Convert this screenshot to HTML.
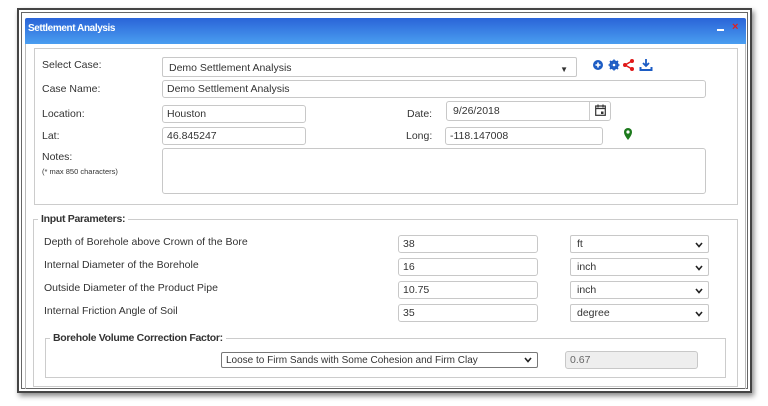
<!DOCTYPE html>
<html><head><style>
*{box-sizing:border-box;margin:0;padding:0}
body{width:768px;height:406px;background:#fff;position:relative;overflow:hidden;font-family:"Liberation Sans",sans-serif;font-size:10.5px;color:#333}
.a{position:absolute}
.inp{position:absolute;border:1px solid #c8c8c8;border-radius:3px;background:#fff;padding:2px 4px;font-size:10.5px;color:#333;height:18px;line-height:13px}
.sel{position:absolute;border:1px solid #c8c8c8;border-radius:2px;background:#fff;padding:2px 6px;font-size:10.5px;height:18px;line-height:13px}
.chev{position:absolute;right:5px;top:6px}
.lbl{position:absolute;font-size:10.5px;color:#333}
</style></head><body>
<div class="a" style="left:17px;top:8px;width:735px;height:385px;border:2px solid #444;box-shadow:2px 3px 5px #888;background:#fff"></div>
<div class="a" style="left:21px;top:12px;width:727px;height:377px;border:1px solid #666;background:#fff"></div>
<div class="a" style="left:25px;top:18px;width:721px;height:26px;background:linear-gradient(#2a64d8,#4a9ef0);border-radius:2px 2px 0 0"></div>
<div class="a" style="left:28px;top:23px;color:#fff;font-size:10px;font-weight:bold;letter-spacing:-0.4px">Settlement Analysis</div>
<div class="a" style="left:717px;top:29px;width:7px;height:2px;background:#fff"></div>
<div class="a" style="left:732px;top:21px;color:#e02020;font-size:11px;font-weight:bold">×</div>
<div class="a" style="left:25px;top:44px;width:721px;height:345px;border-left:1px solid #bbb;border-right:1px solid #bbb"></div>
<div class="a" style="left:34px;top:48px;width:704px;height:157px;border:1px solid #ccc"></div>
<div class="lbl" style="left:42px;top:59px">Select Case:</div>
<div class="sel" style="left:162px;top:57px;width:415px;height:20px;padding-top:4px">Demo Settlement Analysis<span class="a" style="right:8px;top:5px;font-size:8px">▼</span></div>
<svg class="a" style="left:591px;top:58px" width="62" height="14" viewBox="0 0 62 14">
<circle cx="7" cy="7" r="5" fill="#1c5cc4"/><path d="M4.5 7h5M7 4.5v5" stroke="#fff" stroke-width="1.6"/>
<circle cx="23" cy="7" r="3.6" fill="none" stroke="#1c5cc4" stroke-width="2.2"/><path d="M23 1.5v11M17.5 7h11M19 3l8 8M27 3l-8 8" stroke="#1c5cc4" stroke-width="1.6"/><circle cx="23" cy="7" r="1.3" fill="#fff"/>
<circle cx="34" cy="7" r="2" fill="#e01818"/><circle cx="41" cy="3" r="2" fill="#e01818"/><circle cx="41" cy="11" r="2" fill="#e01818"/><path d="M34 7L41 3M34 7l7 4" stroke="#e01818" stroke-width="1.5"/>
<path d="M55 1v6M52 5l3 3 3-3" stroke="#1c5cc4" stroke-width="1.8" fill="none"/><path d="M49.5 9v3h11V9" stroke="#1c5cc4" stroke-width="2" fill="none"/>
</svg>
<div class="lbl" style="left:42px;top:83px">Case Name:</div>
<div class="inp" style="left:162px;top:80px;width:544px">Demo Settlement Analysis</div>
<div class="lbl" style="left:42px;top:108px">Location:</div>
<div class="inp" style="left:162px;top:105px;width:144px">Houston</div>
<div class="lbl" style="left:407px;top:108px">Date:</div>
<div class="inp" style="left:446px;top:101px;width:165px;height:20px;padding:3px 6px">9/26/2018</div>
<div class="a" style="left:589px;top:102px;width:1px;height:18px;background:#ccc"></div>
<svg class="a" style="left:595px;top:104px" width="11" height="12" viewBox="0 0 11 12"><rect x="0.7" y="2" width="9.6" height="9.3" fill="none" stroke="#333" stroke-width="1.2"/><path d="M0.7 4.5h9.6M3 0.5v3M8 0.5v3" stroke="#333" stroke-width="1.2"/><rect x="6" y="7.5" width="2.5" height="2.5" fill="#333"/></svg>
<div class="lbl" style="left:42px;top:130px">Lat:</div>
<div class="inp" style="left:162px;top:127px;width:144px">46.845247</div>
<div class="lbl" style="left:406px;top:130px">Long:</div>
<div class="inp" style="left:445px;top:127px;width:158px">-118.147008</div>
<svg class="a" style="left:623px;top:127px" width="10" height="14" viewBox="0 0 10 14"><path d="M5 13C2 9 1 7 1 5a4 4 0 0 1 8 0c0 2-1 4-4 8z" fill="#1d7a1d"/><circle cx="5" cy="5" r="1.6" fill="#fff"/></svg>
<div class="lbl" style="left:42px;top:151px">Notes:</div>
<div class="lbl" style="left:42px;top:167px;font-size:7.5px">(* max 850 characters)</div>
<div class="inp" style="left:162px;top:148px;width:544px;height:46px"></div>

<div class="a" style="left:33px;top:219px;width:705px;height:168px;border:1px solid #ccc"></div>
<div class="a" style="left:38px;top:213px;background:#fff;padding:0 3px;font-size:10.5px;font-weight:bold;color:#333;letter-spacing:-0.3px">Input Parameters:</div>
<div class="lbl" style="left:44px;top:236px">Depth of Borehole above Crown of the Bore</div>
<div class="inp" style="left:398px;top:235px;width:140px">38</div>
<div class="sel" style="left:570px;top:235px;width:139px">ft<svg class="chev" width="8" height="6"><path d="M1 1l3 3.5L7 1" stroke="#222" stroke-width="1.6" fill="none"/></svg></div>
<div class="lbl" style="left:44px;top:259px">Internal Diameter of the Borehole</div>
<div class="inp" style="left:398px;top:258px;width:140px">16</div>
<div class="sel" style="left:570px;top:258px;width:139px">inch<svg class="chev" width="8" height="6"><path d="M1 1l3 3.5L7 1" stroke="#222" stroke-width="1.6" fill="none"/></svg></div>
<div class="lbl" style="left:44px;top:282px">Outside Diameter of the Product Pipe</div>
<div class="inp" style="left:398px;top:281px;width:140px">10.75</div>
<div class="sel" style="left:570px;top:281px;width:139px">inch<svg class="chev" width="8" height="6"><path d="M1 1l3 3.5L7 1" stroke="#222" stroke-width="1.6" fill="none"/></svg></div>
<div class="lbl" style="left:44px;top:305px">Internal Friction Angle of Soil</div>
<div class="inp" style="left:398px;top:304px;width:140px">35</div>
<div class="sel" style="left:570px;top:304px;width:139px">degree<svg class="chev" width="8" height="6"><path d="M1 1l3 3.5L7 1" stroke="#222" stroke-width="1.6" fill="none"/></svg></div>

<div class="a" style="left:45px;top:338px;width:681px;height:40px;border:1px solid #ccc"></div>
<div class="a" style="left:50px;top:332px;background:#fff;padding:0 3px;font-size:10.5px;font-weight:bold;color:#333;letter-spacing:-0.3px">Borehole Volume Correction Factor:</div>
<div class="sel" style="left:221px;top:352px;width:317px;height:16px;border:1px solid #777;padding:1px 4px;font-size:10px">Loose to Firm Sands with Some Cohesion and Firm Clay<svg class="chev" style="top:4px" width="8" height="6"><path d="M1 1l3 3.5L7 1" stroke="#222" stroke-width="1.6" fill="none"/></svg></div>
<div class="inp" style="left:565px;top:351px;width:133px;background:#eee;color:#666">0.67</div>
</body></html>
